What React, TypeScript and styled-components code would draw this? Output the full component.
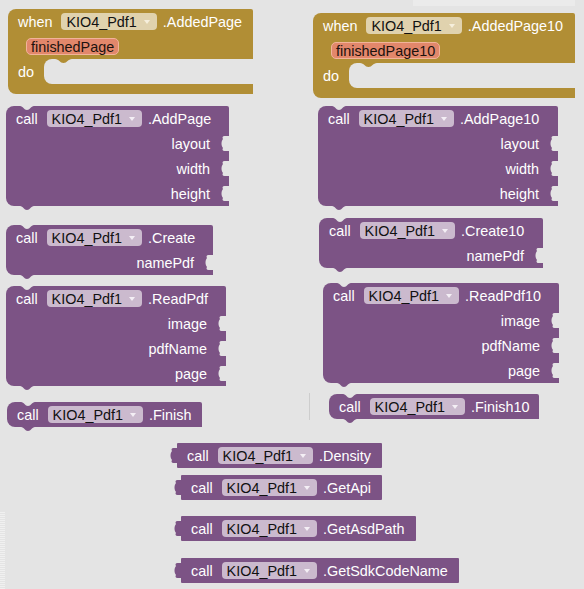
import * as React from 'react';
import styled, { createGlobalStyle } from 'styled-components';

const PURPLE = '#7c5385';
const PURPLE_FIELD = '#cbbace';
const GOLD = '#b18e35';
const GOLD_FIELD = '#e0d2ae';
const CANVAS = '#e4e4e4';

const GlobalStyle = createGlobalStyle`
    html, body {
        margin: 0;
        padding: 0;
        background: ${CANVAS};
    }
`;

const Workspace = styled.div`
    position: relative;
    width: 584px;
    height: 589px;
    overflow: hidden;
    background: ${CANVAS};
    font-family: 'Liberation Sans', Arial, sans-serif;
    font-size: 14.4px;
    color: #ffffff;
`;

const TopStrip = styled.div`
    position: absolute;
    left: 413px;
    top: 0;
    width: 162px;
    height: 6px;
    background: #ebebeb;
`;

const ScrollDots = styled.div`
    position: absolute;
    left: 0;
    top: 512px;
    width: 5px;
    height: 77px;
    background: repeating-linear-gradient(0deg, #f0f0f0 0 1px, ${CANVAS} 1px 2px);
`;

const Divider = styled.div`
    position: absolute;
    left: 309px;
    top: 393px;
    width: 1px;
    height: 27px;
    background: #cdcdcd;
`;

const BlockShell = styled.div<{ $x: number; $y: number; $w: number; $color: string; $flat?: boolean }>`
    position: absolute;
    left: ${(p) => p.$x}px;
    top: ${(p) => p.$y}px;
    width: ${(p) => p.$w}px;
    display: flex;
    flex-direction: column;
    background: ${(p) => p.$color};
    border-radius: ${(p) => (p.$flat ? '1px' : '8px 2px 0 8px')};
`;

const Row = styled.div<{ $end?: boolean; $indent?: number }>`
    position: relative;
    height: 25px;
    display: flex;
    align-items: center;
    justify-content: ${(p) => (p.$end ? 'flex-end' : 'flex-start')};
    padding-left: ${(p) => p.$indent ?? 10}px;
    white-space: nowrap;
`;

const Keyword = styled.span`
    margin-right: 9px;
`;

const Dropdown = styled.span<{ $bg: string }>`
    display: inline-flex;
    align-items: center;
    height: 17px;
    padding: 0 7px 0 5px;
    margin-right: 6px;
    border-radius: 4px;
    background: ${(p) => p.$bg};
    color: #111111;
`;

const Arrow = styled.svg`
    width: 6px;
    height: 4px;
    margin-left: 7px;
    margin-top: 1px;
`;

const Param = styled.span`
    display: inline-flex;
    align-items: center;
    height: 15px;
    padding: 0 4px;
    border: 1px solid #f1b39a;
    border-radius: 5px;
    background: #e2876b;
    color: #1c120e;
`;

const Socket = styled.svg`
    width: 8px;
    height: 15px;
    margin-left: 11px;
    flex-shrink: 0;
`;

const Notch = styled.svg`
    position: absolute;
    left: 14px;
    top: -0.5px;
    width: 14px;
    height: 4px;
`;

const Tab = styled.svg`
    position: absolute;
    left: 14px;
    bottom: -4px;
    width: 14px;
    height: 4px;
`;

const OutputTab = styled.svg`
    position: absolute;
    left: -7px;
    top: 5px;
    width: 8px;
    height: 15px;
`;

const DoLabel = styled.span`
    width: 26px;
`;

const Slot = styled.div`
    position: relative;
    align-self: stretch;
    flex: 1;
    background: ${CANVAS};
    border-radius: 8px 0 0 8px;
`;

const SlotTab = styled.svg`
    position: absolute;
    left: 11px;
    top: 0;
    width: 17px;
    height: 4px;
`;

const BottomBar = styled.div`
    height: 10px;
`;

function ComponentField({ bg, arrow }: { bg: string; arrow: string }) {
    return (
        <Dropdown $bg={bg}>
            KIO4_Pdf1
            <Arrow viewBox="0 0 6 4">
                <path d="M0 0 H6 L3 4 Z" fill={arrow} />
            </Arrow>
        </Dropdown>
    );
}

function SocketShape() {
    return (
        <Socket viewBox="0 0 8 15">
            <path
                d="M8 0 H3.5 C1.5 0 1 1.5 2 3 C0 5 0 10 2 12 C1 13.5 1.5 15 3.5 15 H8 Z"
                fill={CANVAS}
            />
        </Socket>
    );
}

interface CallBlockProps {
    x: number;
    y: number;
    w: number;
    method: string;
    inputs?: string[];
}

function CallBlock({ x, y, w, method, inputs = [] }: CallBlockProps) {
    return (
        <BlockShell $x={x} $y={y} $w={w} $color={PURPLE}>
            <Notch viewBox="0 0 14 4">
                <path d="M0 0 C3 0 4 4 7 4 C10 4 11 0 14 0 Z" fill={CANVAS} />
            </Notch>
            <Row>
                <Keyword>call</Keyword>
                <ComponentField bg={PURPLE_FIELD} arrow="#f4eff5" />
                {method}
            </Row>
            {inputs.map((name) => (
                <Row key={name} $end>
                    {name}
                    <SocketShape />
                </Row>
            ))}
            <Tab viewBox="0 0 14 4">
                <path d="M0 0 C3 0 4 4 7 4 C10 4 11 0 14 0 Z" fill={PURPLE} />
            </Tab>
        </BlockShell>
    );
}

function GetterBlock({ x, y, w, method }: CallBlockProps) {
    return (
        <BlockShell $x={x} $y={y} $w={w} $color={PURPLE} $flat>
            <OutputTab viewBox="0 0 8 15">
                <path
                    d="M8 0 H3.5 C1.5 0 1 1.5 2 3 C0 5 0 10 2 12 C1 13.5 1.5 15 3.5 15 H8 Z"
                    fill={PURPLE}
                />
            </OutputTab>
            <Row>
                <Keyword>call</Keyword>
                <ComponentField bg={PURPLE_FIELD} arrow="#f4eff5" />
                {method}
            </Row>
        </BlockShell>
    );
}

interface EventBlockProps {
    x: number;
    y: number;
    w: number;
    event: string;
    param: string;
}

function EventBlock({ x, y, w, event, param }: EventBlockProps) {
    return (
        <BlockShell $x={x} $y={y} $w={w} $color={GOLD}>
            <Row>
                <Keyword>when</Keyword>
                <ComponentField bg={GOLD_FIELD} arrow="#f6efdc" />
                {event}
            </Row>
            <Row $indent={18}>
                <Param>{param}</Param>
            </Row>
            <Row>
                <DoLabel>do</DoLabel>
                <Slot>
                    <SlotTab viewBox="0 0 17 4">
                        <path d="M0 0 C4 0 5 4 8.5 4 C12 4 13 0 17 0 Z" fill={GOLD} />
                    </SlotTab>
                </Slot>
            </Row>
            <BottomBar />
        </BlockShell>
    );
}

const callBlocks: CallBlockProps[] = [
    { x: 6, y: 106, w: 223, method: '.AddPage', inputs: ['layout', 'width', 'height'] },
    { x: 6, y: 225, w: 207, method: '.Create', inputs: ['namePdf'] },
    { x: 6, y: 286, w: 220, method: '.ReadPdf', inputs: ['image', 'pdfName', 'page'] },
    { x: 7, y: 402, w: 195, method: '.Finish' },
    { x: 318, y: 106, w: 240, method: '.AddPage10', inputs: ['layout', 'width', 'height'] },
    { x: 319, y: 218, w: 224, method: '.Create10', inputs: ['namePdf'] },
    { x: 323, y: 283, w: 236, method: '.ReadPdf10', inputs: ['image', 'pdfName', 'page'] },
    { x: 329, y: 394, w: 210, method: '.Finish10' },
];

const getterBlocks: CallBlockProps[] = [
    { x: 177, y: 443, w: 205, method: '.Density' },
    { x: 181, y: 475, w: 201, method: '.GetApi' },
    { x: 181, y: 516, w: 235, method: '.GetAsdPath' },
    { x: 181, y: 558, w: 278, method: '.GetSdkCodeName' },
];

function App(): React.ReactElement {
    return (
        <>
            <GlobalStyle />
            <Workspace>
                <TopStrip />
                <ScrollDots />
                <Divider />
                <EventBlock x={8} y={9} w={245} event=".AddedPage" param="finishedPage" />
                <EventBlock x={313} y={13} w={262} event=".AddedPage10" param="finishedPage10" />
                {callBlocks.map((b) => (
                    <CallBlock key={b.method} {...b} />
                ))}
                {getterBlocks.map((b) => (
                    <GetterBlock key={b.method} {...b} />
                ))}
            </Workspace>
        </>
    );
}

export default App;
